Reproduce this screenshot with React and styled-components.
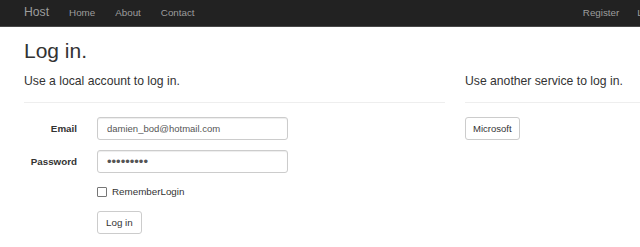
import React from "react";
import styled, { createGlobalStyle } from "styled-components";

const GlobalStyle = createGlobalStyle`
  html, body {
    margin: 0;
    padding: 0;
    background: #fff;
    overflow: hidden;
  }
  body {
    font-family: "Liberation Sans", Arial, sans-serif;
    color: #333;
  }
  * {
    box-sizing: border-box;
  }
`;

const Navbar = styled.nav`
  display: flex;
  align-items: baseline;
  height: 27px;
  padding: 2px 0 0 24px;
  background: #222;
  border-bottom: 1px solid #484848;
`;

const Brand = styled.a`
  font-size: 12.2px;
  color: #9d9d9d;
  text-decoration: none;
  margin-right: 20px;
`;

const NavList = styled.ul`
  display: flex;
  gap: ${(p) => (p.$right ? "18px" : "20px")};
  list-style: none;
  margin: 0;
  padding: 0;
  margin-left: ${(p) => (p.$right ? "auto" : "0")};
  margin-right: ${(p) => (p.$right ? "-24px" : "0")};
`;

const NavLink = styled.a`
  font-size: 9.8px;
  color: #9d9d9d;
  text-decoration: none;
  white-space: nowrap;
`;

const Container = styled.main`
  padding: 0 24px;
`;

const Title = styled.h2`
  font-size: 21px;
  font-weight: 400;
  line-height: 23px;
  margin: 12px 0 0;
`;

const Row = styled.div`
  display: grid;
  grid-template-columns: 421px 1fr;
  column-gap: 20px;
  margin-right: -24px;
`;

const Section = styled.section`
  display: flex;
  flex-direction: column;
`;

const SubTitle = styled.h4`
  font-size: 12.2px;
  font-weight: 400;
  line-height: 13.4px;
  margin: 13px 0 14px;
  white-space: nowrap;
`;

const Rule = styled.hr`
  border: 0;
  border-top: 1px solid #eee;
  margin: 0 0 14px;
  width: 100%;
`;

const Form = styled.form`
  display: grid;
  grid-template-columns: 53px 191px;
  column-gap: 20px;
  row-gap: 10px;
  align-items: center;
`;

const Label = styled.label`
  font-size: 9.8px;
  font-weight: 700;
  text-align: right;
  white-space: nowrap;
`;

const Input = styled.input`
  height: 23px;
  width: 100%;
  padding: 0 9px;
  font-family: "Liberation Sans", Arial, sans-serif;
  font-size: ${(p) => (p.type === "password" ? "13px" : "9.5px")};
  color: #555;
  border: 1px solid #ccc;
  border-radius: 3px;
  box-shadow: inset 0 1px 1px rgba(0, 0, 0, 0.075);
  outline: none;
`;

const CheckRow = styled.label`
  grid-column: 2;
  display: flex;
  align-items: center;
  gap: 5px;
  font-size: 9.8px;
  margin-top: 1px;
  height: 15px;
`;

const Check = styled.input`
  appearance: none;
  width: 10px;
  height: 10px;
  margin: 0;
  border: 1px solid #767676;
  border-radius: 1px;
  background: #fff;
`;

const Button = styled.button`
  height: 23px;
  padding: 0 ${(p) => p.$pad || 8}px;
  font-family: "Liberation Sans", Arial, sans-serif;
  font-size: ${(p) => p.$size || 9.8}px;
  color: #333;
  background: #fff;
  border: 1px solid #ccc;
  border-radius: 3px;
  justify-self: start;
  align-self: start;
`;

const ButtonCell = styled.div`
  grid-column: 2;
  margin-top: 2px;
`;

export default function App() {
  return (
    <>
      <GlobalStyle />
      <Navbar>
        <Brand href="#">Host</Brand>
        <NavList>
          <li><NavLink href="#">Home</NavLink></li>
          <li><NavLink href="#">About</NavLink></li>
          <li><NavLink href="#">Contact</NavLink></li>
        </NavList>
        <NavList $right>
          <li><NavLink href="#">Register</NavLink></li>
          <li><NavLink href="#">Log in</NavLink></li>
        </NavList>
      </Navbar>
      <Container>
        <Title>Log in.</Title>
        <Row>
          <Section>
            <SubTitle>Use a local account to log in.</SubTitle>
            <Rule />
            <Form onSubmit={(e) => e.preventDefault()}>
              <Label htmlFor="email">Email</Label>
              <Input id="email" type="text" defaultValue="damien_bod@hotmail.com" />
              <Label htmlFor="password">Password</Label>
              <Input id="password" type="password" defaultValue="123456789" />
              <CheckRow>
                <Check type="checkbox" />
                RememberLogin
              </CheckRow>
              <ButtonCell>
                <Button type="submit">Log in</Button>
              </ButtonCell>
            </Form>
          </Section>
          <Section>
            <SubTitle>Use another service to log in.</SubTitle>
            <Rule />
            <Button type="button" $size={9.5} $pad={7}>Microsoft</Button>
          </Section>
        </Row>
      </Container>
    </>
  );
}
